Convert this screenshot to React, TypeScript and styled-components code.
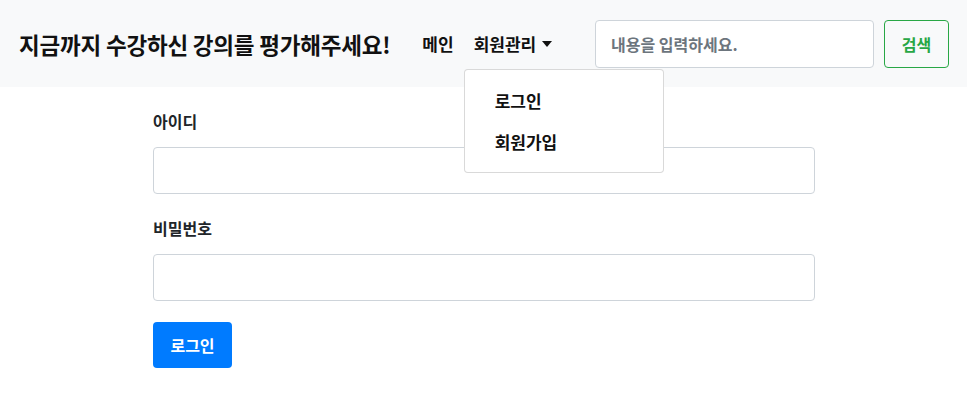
import styled, { createGlobalStyle } from "styled-components"

const Global = createGlobalStyle`
  * { box-sizing: border-box; }
  body {
    margin: 0;
    background: #fff;
    font-family: "Noto Sans CJK KR", "Noto Sans", sans-serif;
    font-weight: 700;
    color: #212529;
  }
`

const App = () => {
  return (
    <div>
      <Global />
      <Navbar>
        <Brand>지금까지 수강하신 강의를 평가해주세요!</Brand>
        <NavList>
          <NavItem>
            <NavLink>메인</NavLink>
          </NavItem>
          <NavItem>
            <NavLink>
              회원관리
              <Caret />
            </NavLink>
            <Dropdown>
              <DropItem>로그인</DropItem>
              <DropItem>회원가입</DropItem>
            </Dropdown>
          </NavItem>
        </NavList>
        <SearchForm>
          <SearchInput placeholder="내용을 입력하세요." />
          <SearchButton>검색</SearchButton>
        </SearchForm>
      </Navbar>
      <Container>
        <FormGroup>
          <Label>아이디</Label>
          <Input type="text" />
        </FormGroup>
        <FormGroup>
          <Label>비밀번호</Label>
          <Input type="password" />
        </FormGroup>
        <Button>로그인</Button>
      </Container>
    </div>
  )
}

export default App

const Navbar = styled.nav`
  height: 87px;
  background: #f8f9fa;
  display: flex;
  align-items: center;
  padding: 0 18px 0 19px;
`
const Brand = styled.div`
  font-size: 22.5px;
  letter-spacing: -0.2px;
  color: #111;
  white-space: nowrap;
`
const NavList = styled.ul`
  list-style: none;
  display: flex;
  margin: 0 0 0 22px;
  padding: 0;
`
const NavItem = styled.li`
  position: relative;
`
const NavLink = styled.div`
  display: flex;
  align-items: center;
  font-size: 17px;
  color: #111;
  padding: 8px 10px;
`
const Caret = styled.span`
  width: 0;
  height: 0;
  margin-left: 6px;
  border-top: 6px solid #111;
  border-left: 5px solid transparent;
  border-right: 5px solid transparent;
`
const Dropdown = styled.div`
  position: absolute;
  top: 46px;
  left: 0;
  width: 200px;
  background: #fff;
  border: 1px solid rgba(0, 0, 0, 0.15);
  border-radius: 4px;
  padding: 10px 0;
  z-index: 10;
`
const DropItem = styled.div`
  font-size: 17px;
  color: #111;
  padding: 0 30px;
  height: 41px;
  line-height: 41px;
`
const SearchForm = styled.form`
  margin-left: auto;
  display: flex;
  gap: 10px;
`
const SearchInput = styled.input`
  width: 279px;
  height: 48px;
  padding: 0 15px;
  font-family: inherit;
  font-weight: 700;
  font-size: 16px;
  border: 1px solid #ced4da;
  border-radius: 4px;
  outline: none;
  &::placeholder {
    color: #6c757d;
  }
`
const SearchButton = styled.button`
  width: 65px;
  height: 48px;
  font-family: inherit;
  font-weight: 700;
  font-size: 16px;
  color: #28a745;
  background: transparent;
  border: 1px solid #28a745;
  border-radius: 4px;
`
const Container = styled.div`
  width: 662px;
  margin: 0 0 0 153px;
  padding-top: 22px;
`
const FormGroup = styled.div`
  margin-bottom: 22px;
  &:last-of-type {
    margin-bottom: 21px;
  }
`
const Label = styled.div`
  font-size: 16px;
  color: #212529;
  line-height: 24px;
  margin-bottom: 14px;
`
const Input = styled.input`
  display: block;
  width: 100%;
  height: 47px;
  border: 1px solid #ced4da;
  border-radius: 4px;
  outline: none;
`
const Button = styled.button`
  width: 79px;
  height: 46px;
  font-family: inherit;
  font-weight: 700;
  font-size: 16px;
  color: #fff;
  background: #007bff;
  border: none;
  border-radius: 4px;
`
